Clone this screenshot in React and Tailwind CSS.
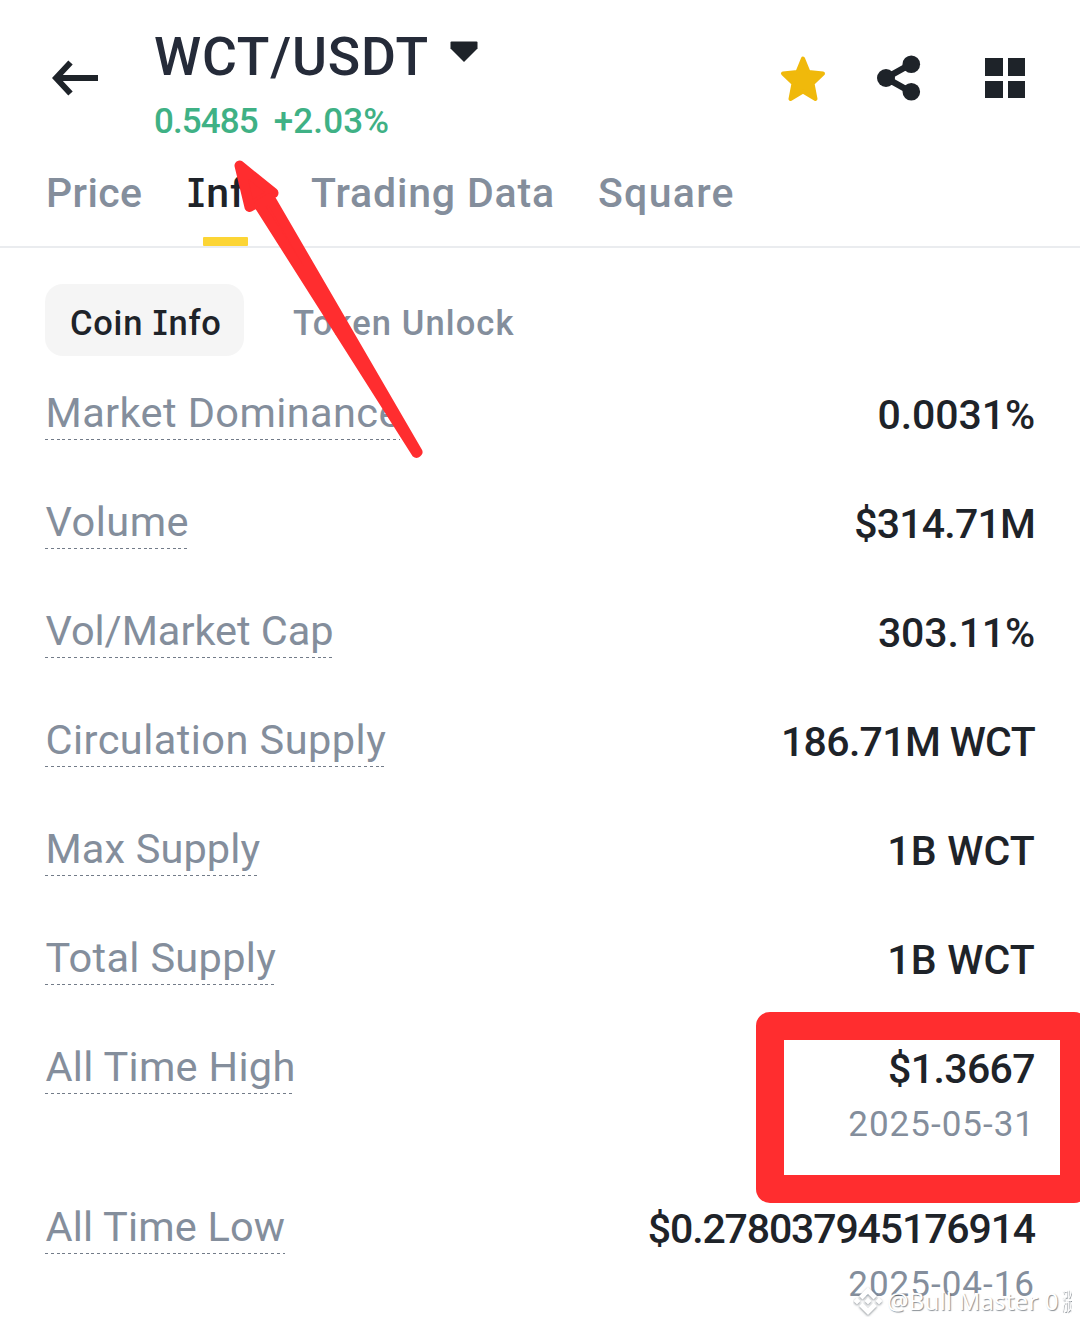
import React from "react";

const rows = [
  { label: "Market Dominance", ls: "tracking-[0.4px]", lw: "w-[355px]", value: "0.0031%", vs: "tracking-[-0.1px]" },
  { label: "Volume", ls: "tracking-[0.5px]", lw: "w-[142px]", value: "$314.71M", vs: "tracking-[-0.8px]" },
  { label: "Vol/Market Cap", ls: "tracking-[-0.05px]", lw: "w-[289px]", value: "303.11%", vs: "tracking-[-0.15px]" },
  { label: "Circulation Supply", ls: "tracking-[0.46px]", lw: "w-[339px]", value: "186.71M WCT", vs: "tracking-[-0.65px]" },
  { label: "Max Supply", ls: "tracking-[0.12px]", lw: "w-[213px]", value: "1B WCT", vs: "tracking-[0.2px]" },
  { label: "Total Supply", ls: "tracking-[0.32px]", lw: "w-[231px]", value: "1B WCT", vs: "tracking-[0.2px]" },
  { label: "All Time High", ls: "tracking-[0.3px]", lw: "w-[249px]", value: "$1.3667", vs: "tracking-[-0.6px]", date: "2025-05-31", ds: "tracking-[1px]" },
  { label: "All Time Low", ls: "tracking-[0.18px]", lw: "w-[240px]", value: "$0.278037945176914", vs: "tracking-[-1.13px]", date: "2025-04-16", ds: "tracking-[1px]" },
];

// Capital I with serifs, as in the brand typeface
function SerifI() {
  return <span className="font-[Inter,sans-serif] [font-feature-settings:'cv08'] text-[0.98em]">I</span>;
}

function Row({ row }) {
  return (
    <div className={`flex justify-between pl-[45px] pr-[45px] ${row.date ? "h-40" : "h-[109px]"}`}>
      <div>
        <div className={`pl-[0.5px] text-[41.5px] leading-[50px] whitespace-nowrap text-[#848e9c] ${row.ls}`}>{row.label}</div>
        <div className={`mt-px h-px bg-[repeating-linear-gradient(90deg,#737c89_0_3px,transparent_3px_5.8px)] ${row.lw}`} />
      </div>
      <div className="flex flex-col items-end pt-[2px] whitespace-nowrap">
        <div className={`text-[41px] leading-[50px] font-medium text-[#1e2329] ${row.vs}`}>{row.value}</div>
        {row.date && <div className={`mt-[10px] text-[35px] leading-[42px] text-[#848e9c] ${row.ds}`}>{row.date}</div>}
      </div>
    </div>
  );
}

function Header() {
  return (
    <header className="flex h-[168px] text-[#1e2329]">
      <svg className="mt-[59px] ml-[52px] h-[38px] w-[46px]" viewBox="0 0 46 38" fill="none" stroke="currentColor" strokeWidth="6">
        <path d="M46 19H5M18.500 3.500L4 19L18.500 34.500" />
      </svg>
      <div className="ml-[56px] w-[399px] pt-[25px]">
        <div className="flex">
          <h1 className="text-[53.5px] leading-[64px] font-medium tracking-[0.8px] text-[#252b39]">WCT/USDT</h1>
          <svg className="mt-4 ml-[21px] h-[22px] w-[28px]" viewBox="0 0 28 22" fill="currentColor">
            <path d="M1.5 0.5H26.5Q27.5 0.5 27.5 1.5V7.5L14 21L0.5 7.5V1.5Q0.5 0.5 1.5 0.5Z" />
          </svg>
        </div>
        <div className="mt-3 flex gap-4 text-[35px] leading-[42px] font-medium text-[#3fb185]">
          <span className="tracking-[-0.9px]">0.5485</span>
          <span className="tracking-[0.1px]">+2.03%</span>
        </div>
      </div>
      <svg className="mt-[55px] ml-[227px] h-[47px] w-[46px] text-[#f0b90b]" viewBox="0 0 46 47" fill="currentColor" stroke="currentColor" strokeWidth="4" strokeLinejoin="round">
        <path d="M23 3.5L28.5 17L43 18.5L32.5 28.5L35.5 44L23 36.5L10.500 44L13.500 28.5L3 18.5L17.500 17Z" />
      </svg>
      <svg className="mt-[55px] ml-[51px] h-[46px] w-[44px]" viewBox="0 0 44 46" fill="currentColor">
        <path d="M34 9L9 23L34 37" fill="none" stroke="currentColor" strokeWidth="6.500" />
        <circle cx="9" cy="23" r="9" />
        <circle cx="34.300" cy="9.300" r="8.800" />
        <circle cx="34.300" cy="36.700" r="8.800" />
      </svg>
      <div className="mt-[58px] ml-[64px] grid h-10 w-10 grid-cols-2 gap-[5px]">
        <div className="bg-current" />
        <div className="bg-current" />
        <div className="bg-current" />
        <div className="bg-current" />
      </div>
    </header>
  );
}

function Tabs() {
  return (
    <nav className="flex h-20 border-b-2 border-[#eaecef] pl-[46px] text-[41px] leading-[50px] font-medium whitespace-nowrap text-[#848e9c]">
      <span className="w-[141px] tracking-[0.37px]">Price</span>
      <span className="flex w-[124px] flex-col justify-between text-[#1e2329]">
        <span className="tracking-[1px]"><SerifI />nfo</span>
        <span className="ml-4 h-[9px] w-[45px] rounded-[1px] bg-[#fcd535]" />
      </span>
      <span className="w-[287px] tracking-[0.84px]">Trading Data</span>
      <span className="tracking-[1.3px]">Square</span>
    </nav>
  );
}

function SubTabs() {
  return (
    <div className="flex h-[140px] pt-9 pl-[45px] text-[34.5px] leading-[42px] font-medium whitespace-nowrap">
      <div className="h-[72px] w-[199px] rounded-[18px] bg-[#f5f5f5] pt-[18px] pl-[25px] tracking-[0.75px] text-[#1e2329]">
        Coin <SerifI />nfo
      </div>
      <div className="pt-[18px] pl-[49px] tracking-[1.1px] text-[#848e9c]">Token Unlock</div>
    </div>
  );
}

function Annotations() {
  return (
    <>
      <svg className="pointer-events-none absolute top-[150px] left-[220px] h-[320px] w-[210px]" viewBox="220 150 210 320" fill="#ff2d2f" stroke="#ff2d2f" strokeLinejoin="round">
        <path strokeWidth="10" d="M239.500 165.500L273.500 193L249.500 207Z" />
        <path strokeWidth="10" d="M270 198L417.500 452L416.500 453L259 205Z" />
      </svg>
      <div className="pointer-events-none absolute top-[1012px] left-[756px] h-[191px] w-[332px] rounded-[14px] border-[28px] border-[#ff2d2f]" />
    </>
  );
}

function Watermark() {
  return (
    <div className="absolute top-[1285px] left-[853px] flex w-[219px] items-center overflow-hidden text-white">
      <svg className="h-[30px] w-[30px] shrink-0 drop-shadow-[0_1px_1px_rgba(60,70,80,0.6)]" viewBox="0 0 30 30" fill="currentColor">
        <path d="M15 1L24 10L20.500 13.500L15 8L9.500 13.500L6 10ZM15 29L6 20L9.500 16.500L15 22L20.500 16.500L24 20ZM15 11.500L18.500 15L15 18.500L11.500 15ZM4 11.500L7.500 15L4 18.500L0.500 15ZM26 11.500L29.500 15L26 18.500L22.500 15Z" />
      </svg>
      <span className="ml-1 font-['Noto_Sans','Noto_Sans_CJK_SC',sans-serif] text-[24px] leading-[32px] tracking-[0.15px] whitespace-nowrap [text-shadow:1px_1px_1px_rgba(60,70,80,0.6)]">
        @Bull Master 0<span className="ml-[3px] inline-block origin-left scale-x-45">涨</span>
      </span>
    </div>
  );
}

export default function App() {
  return (
    <div className="relative h-[1326px] w-[1080px] overflow-hidden bg-white font-[Roboto,sans-serif]">
      <Header />
      <Tabs />
      <SubTabs />
      <main>
        {rows.map((row) => (
          <Row key={row.label} row={row} />
        ))}
      </main>
      <Annotations />
      <Watermark />
    </div>
  );
}
